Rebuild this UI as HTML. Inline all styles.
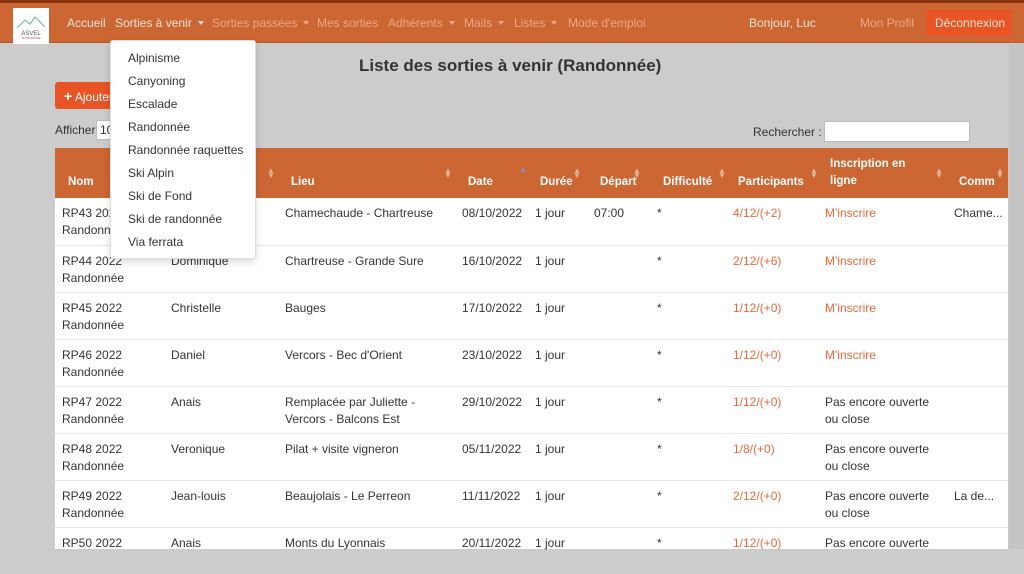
<!DOCTYPE html>
<html><head><meta charset="utf-8"><style>
*{margin:0;padding:0;box-sizing:border-box}
body{width:1024px;height:549px;overflow:hidden;background:#cccccc;font-family:"Liberation Sans",sans-serif;font-size:12px;color:#333;position:relative}
.a{position:absolute;white-space:nowrap}
.top{position:absolute;left:0;top:0;width:1024px;height:3px;background:#8a3510}
.nav{position:absolute;left:0;top:3px;width:1024px;height:40px;background:#cc6633;border-bottom:1px solid #b85a2a}
.nav .a{top:13px;font-size:12px;color:#f3e2d8}
.nav .d{color:#e8a888}
.car{display:inline-block;width:0;height:0;border-left:3.5px solid transparent;border-right:3.5px solid transparent;border-top:4px solid currentColor;margin-left:6px;vertical-align:2px}
.logo{position:absolute;left:13px;top:5px;width:36px;height:36px;background:#fff}
.tbl{position:absolute;left:55px;top:148px;width:953px;height:401px;background:#fff}
.hd{position:absolute;left:55px;top:148px;width:953px;height:50px;background:#cc6633}
.hd .a{color:#fff;font-weight:bold;font-size:11.5px}
.sa{position:absolute;color:#e0b49a;font-size:8px;line-height:5px}
.row{position:absolute;left:55px;width:953px;border-top:1px solid #e6e6e6;height:47px}
.c{position:absolute;top:7px;line-height:17px;font-size:12px;color:#333;white-space:nowrap}
.o{color:#e8693b}
.menu{position:absolute;left:110px;top:40px;width:146px;height:219px;background:#fff;border:1px solid #ddd;border-radius:3px;box-shadow:0 3px 8px rgba(0,0,0,.15)}
.menu div{position:absolute;left:17px;font-size:12px;color:#333}
</style></head><body>
<div class="top"></div>
<div class="nav">
<div class="logo"><svg width="36" height="36"><path d="M4 20 L12 12 L17 16 L22 9 L32 19" fill="none" stroke="#7cb8a8" stroke-width="1.2"/><text x="18" y="27" font-size="6" text-anchor="middle" fill="#555" font-family="Liberation Sans">ASVEL</text><text x="18" y="31" font-size="2.5" text-anchor="middle" fill="#c33" font-family="Liberation Sans">SKI MONTAGNE</text></svg></div>
<div class="a" style="left:67px">Accueil</div>
<div class="a" style="left:115px">Sorties à venir<span class="car"></span></div>
<div class="a d" style="left:212px">Sorties passées<span class="car"></span></div>
<div class="a d" style="left:317px">Mes sorties</div>
<div class="a d" style="left:388px">Adhérents<span class="car"></span></div>
<div class="a d" style="left:464px">Mails<span class="car"></span></div>
<div class="a d" style="left:514px">Listes<span class="car"></span></div>
<div class="a d" style="left:568px">Mode d'emploi</div>
<div class="a" style="left:749px">Bonjour, Luc</div>
<div class="a d" style="left:860px">Mon Profil</div>
<div style="position:absolute;left:926px;top:7px;width:86px;height:26px;background:#e85424;border-radius:3px"></div>
<div class="a" style="left:935px;color:#fce6dc">Déconnexion</div>
</div>
<div class="a" style="left:359px;top:56px;font-size:17px;font-weight:bold;color:#333">Liste des sorties à venir (Randonnée)</div>
<div style="position:absolute;left:55px;top:82px;width:60px;height:27px;background:#e85424;border-radius:3px"></div>
<div class="a" style="left:64px;top:88px;color:#fff;font-size:12px"><b style="font-size:14px">+</b> Ajouter</div>
<div class="a" style="left:55px;top:123px">Afficher</div>
<div style="position:absolute;left:96px;top:120px;width:30px;height:20px;background:#fff;border:1px solid #bbb;border-radius:2px"></div>
<div class="a" style="left:100px;top:123px">10</div>
<div class="a" style="left:753px;top:125px">Rechercher :</div>
<div style="position:absolute;left:824px;top:121px;width:146px;height:21px;background:#fff;border:1px solid #bbb"></div>
<div style="position:absolute;left:1009px;top:44px;width:15px;height:505px;background:#c4c4c4"></div>
<div class="tbl"></div>
<div class="hd">
<div class="a" style="left:13px;top:28px">Nom</div>
<div class="a" style="left:236px;top:28px">Lieu</div>
<div class="a" style="left:413px;top:28px">Date</div>
<div class="a" style="left:485px;top:28px">Durée</div>
<div class="a" style="left:545px;top:28px">Départ</div>
<div class="a" style="left:608px;top:28px">Difficulté</div>
<div class="a" style="left:683px;top:28px">Participants</div>
<div class="a" style="left:775px;top:8px;line-height:17px">Inscription en<br>ligne</div>
<div class="a" style="left:904px;top:28px">Comm</div>
<div class="sa" style="left:212px;top:20px">▲<br>▼</div>
<div class="sa" style="left:389px;top:20px">▲<br>▼</div>
<div class="sa" style="left:464px;top:19px;color:#8888dd">▲</div>
<div class="sa" style="left:518px;top:20px">▲<br>▼</div>
<div class="sa" style="left:578px;top:20px">▲<br>▼</div>
<div class="sa" style="left:663px;top:20px">▲<br>▼</div>
<div class="sa" style="left:755px;top:20px">▲<br>▼</div>
<div class="sa" style="left:880px;top:20px">▲<br>▼</div>
<div class="sa" style="left:941px;top:20px">▲<br>▼</div>
</div>

<div class="row" style="top:198px;border-top:0"><div class="c" style="left:7px">RP43 2022<br>Randonnée</div><div class="c" style="left:116px">Luc</div><div class="c" style="left:230px">Chamechaude - Chartreuse</div><div class="c" style="left:407px">08/10/2022</div><div class="c" style="left:480px">1 jour</div><div class="c" style="left:539px">07:00</div><div class="c" style="left:602px">*</div><div class="c o" style="left:678px">4/12/(+2)</div><div class="c o" style="left:770px">M'inscrire</div><div class="c" style="left:899px">Chame...</div></div>
<div class="row" style="top:245px"><div class="c" style="left:7px">RP44 2022<br>Randonnée</div><div class="c" style="left:116px">Dominique</div><div class="c" style="left:230px">Chartreuse - Grande Sure</div><div class="c" style="left:407px">16/10/2022</div><div class="c" style="left:480px">1 jour</div><div class="c" style="left:602px">*</div><div class="c o" style="left:678px">2/12/(+6)</div><div class="c o" style="left:770px">M'inscrire</div></div>
<div class="row" style="top:292px"><div class="c" style="left:7px">RP45 2022<br>Randonnée</div><div class="c" style="left:116px">Christelle</div><div class="c" style="left:230px">Bauges</div><div class="c" style="left:407px">17/10/2022</div><div class="c" style="left:480px">1 jour</div><div class="c" style="left:602px">*</div><div class="c o" style="left:678px">1/12/(+0)</div><div class="c o" style="left:770px">M'inscrire</div></div>
<div class="row" style="top:339px"><div class="c" style="left:7px">RP46 2022<br>Randonnée</div><div class="c" style="left:116px">Daniel</div><div class="c" style="left:230px">Vercors - Bec d'Orient</div><div class="c" style="left:407px">23/10/2022</div><div class="c" style="left:480px">1 jour</div><div class="c" style="left:602px">*</div><div class="c o" style="left:678px">1/12/(+0)</div><div class="c o" style="left:770px">M'inscrire</div></div>
<div class="row" style="top:386px"><div class="c" style="left:7px">RP47 2022<br>Randonnée</div><div class="c" style="left:116px">Anais</div><div class="c" style="left:230px">Remplacée par Juliette -<br>Vercors - Balcons Est</div><div class="c" style="left:407px">29/10/2022</div><div class="c" style="left:480px">1 jour</div><div class="c" style="left:602px">*</div><div class="c o" style="left:678px">1/12/(+0)</div><div class="c" style="left:770px">Pas encore ouverte<br>ou close</div></div>
<div class="row" style="top:433px"><div class="c" style="left:7px">RP48 2022<br>Randonnée</div><div class="c" style="left:116px">Veronique</div><div class="c" style="left:230px">Pilat + visite vigneron</div><div class="c" style="left:407px">05/11/2022</div><div class="c" style="left:480px">1 jour</div><div class="c" style="left:602px">*</div><div class="c o" style="left:678px">1/8/(+0)</div><div class="c" style="left:770px">Pas encore ouverte<br>ou close</div></div>
<div class="row" style="top:480px"><div class="c" style="left:7px">RP49 2022<br>Randonnée</div><div class="c" style="left:116px">Jean-louis</div><div class="c" style="left:230px">Beaujolais - Le Perreon</div><div class="c" style="left:407px">11/11/2022</div><div class="c" style="left:480px">1 jour</div><div class="c" style="left:602px">*</div><div class="c o" style="left:678px">2/12/(+0)</div><div class="c" style="left:770px">Pas encore ouverte<br>ou close</div><div class="c" style="left:899px">La de...</div></div>
<div class="row" style="top:527px"><div class="c" style="left:7px">RP50 2022</div><div class="c" style="left:116px">Anais</div><div class="c" style="left:230px">Monts du Lyonnais</div><div class="c" style="left:407px">20/11/2022</div><div class="c" style="left:480px">1 jour</div><div class="c" style="left:602px">*</div><div class="c o" style="left:678px">1/12/(+0)</div><div class="c" style="left:770px">Pas encore ouverte</div></div>

<div class="menu">
<div style="top:10px">Alpinisme</div>
<div style="top:33px">Canyoning</div>
<div style="top:56px">Escalade</div>
<div style="top:79px">Randonnée</div>
<div style="top:102px">Randonnée raquettes</div>
<div style="top:125px">Ski Alpin</div>
<div style="top:148px">Ski de Fond</div>
<div style="top:171px">Ski de randonnée</div>
<div style="top:194px">Via ferrata</div>
</div>
</body></html>
